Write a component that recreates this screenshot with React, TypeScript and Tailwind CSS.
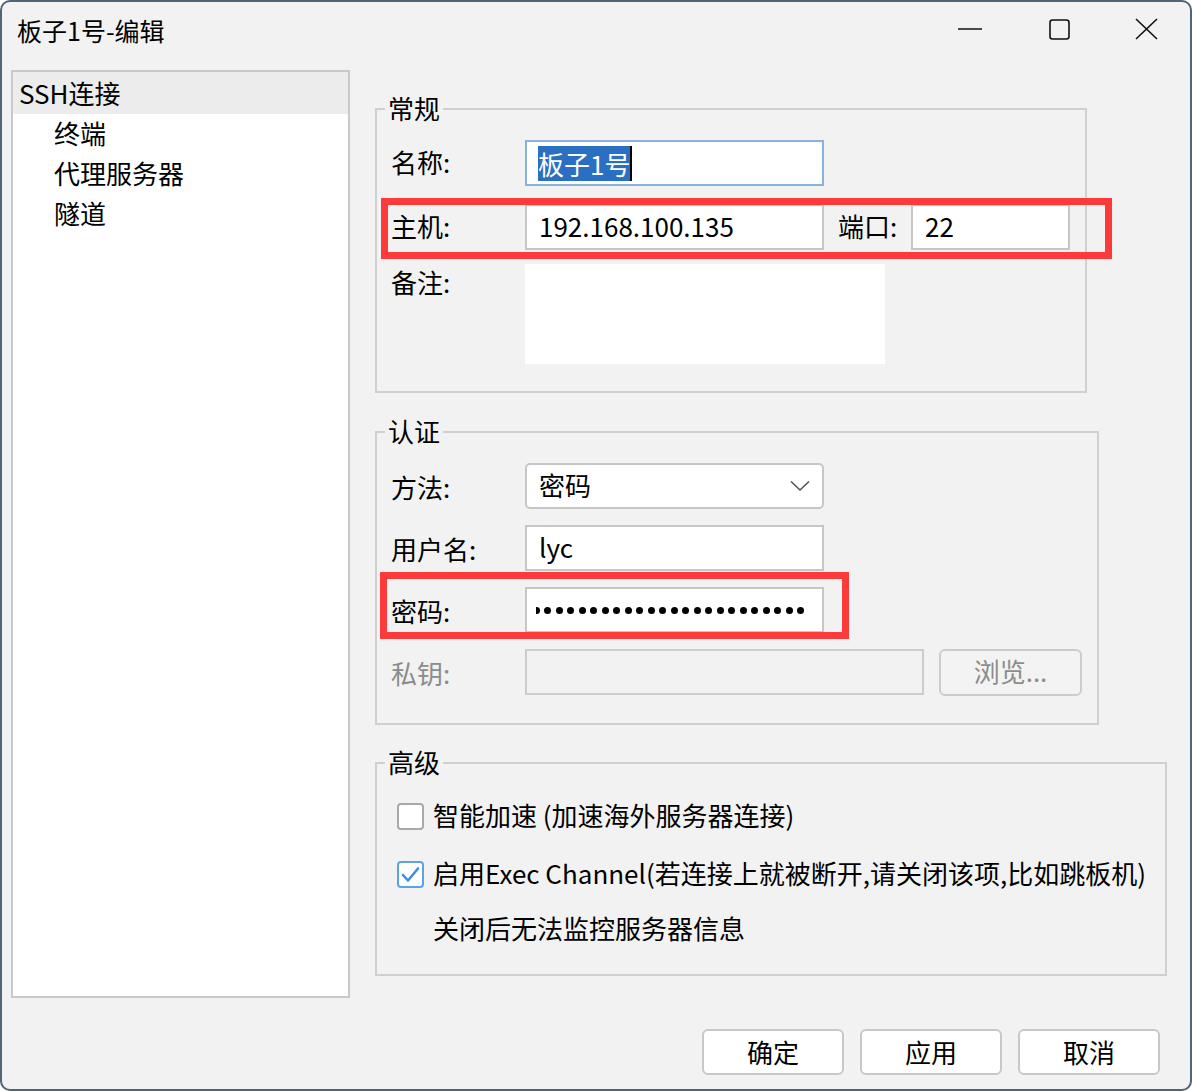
import React from "react";

// Session edit dialog (SSH) — fixed-size Windows-style window
const DOTS = Array.from({ length: 25 }, (_, i) => i);

function Group({ title, className, children }: { title: string; className: string; children: React.ReactNode }) {
  return (
    <div className={`relative border-2 border-[#d0d0d0] ${className}`}>
      <span className="absolute -top-[17px] left-[8px] bg-[#f2f2f2] px-[3px] leading-[30px]">{title}</span>
      {children}
    </div>
  );
}

function Field({ children, className }: { children?: React.ReactNode; className: string }) {
  return (
    <div className={`h-[46px] border-2 border-[#c6c6c6] bg-white pl-[12px] pb-[3px] flex items-center shrink-0 ${className}`}>
      {children}
    </div>
  );
}

function TitleButtons() {
  return (
    <div className="ml-auto flex">
      <div className="w-[88px] h-[54px] flex items-center justify-center pr-[2px]">
        <svg width="24" height="4" viewBox="0 0 24 4">
          <line x1="0" y1="2" x2="24" y2="2" stroke="#111" strokeWidth="1.6" />
        </svg>
      </div>
      <div className="w-[88px] h-[54px] flex items-center justify-center">
        <svg width="21" height="21" viewBox="0 0 21 21">
          <rect x="1" y="1" width="19" height="19" rx="2.5" fill="none" stroke="#111" strokeWidth="1.6" />
        </svg>
      </div>
      <div className="w-[87px] h-[54px] flex items-center justify-center">
        <svg width="23" height="22" viewBox="0 0 23 22">
          <path d="M1 1 L22 21 M22 1 L1 21" stroke="#111" strokeWidth="1.6" fill="none" />
        </svg>
      </div>
    </div>
  );
}

export default function App() {
  return (
    <div className="w-[1192px] h-[1091px] bg-[#f2f2f2] border-2 border-[#4f6573] rounded-[10px] overflow-hidden text-[26px] text-black font-['Noto_Sans_CJK_SC','Noto_Sans',sans-serif]">
      {/* title bar */}
      <div className="h-[68px] flex items-start">
        <div className="ml-[15px] mt-[11px] text-[25px] leading-[34px]">板子1号-编辑</div>
        <TitleButtons />
      </div>

      <div className="flex items-start">
        {/* tree */}
        <div className="ml-[9px] w-[339px] h-[928px] border-2 border-[#c9c9c9] bg-white leading-[38px]">
          <div className="h-[42px] bg-[#ececec] pl-[6px] leading-[42px]">SSH连接</div>
          <div className="h-[40px] pl-[41px]">终端</div>
          <div className="h-[40px] pl-[41px]">代理服务器</div>
          <div className="h-[40px] pl-[41px]">隧道</div>
        </div>

        <div className="ml-[25px] flex-1 flex flex-col pt-[38px]">
          {/* 常规 */}
          <Group title="常规" className="w-[712px] h-[285px] pt-[30px] pl-[14px]">
            <div className="flex items-center h-[46px]">
              <div className="w-[134px] shrink-0 pb-[3px]">名称:</div>
              <div className="w-[299px] h-[46px] border-2 border-[#8ab2de] bg-white pl-[11px] flex items-center">
                <span className="bg-[#2a6fc1] text-white leading-[35px] border-r-2 border-black">板子1号</span>
              </div>
            </div>
            <div className="flex items-center h-[46px] mt-[18px]">
              <div className="w-[134px] shrink-0 pb-[3px]">主机:</div>
              <Field className="w-[299px] leading-[30px]">192.168.100.135</Field>
              <div className="w-[73px] ml-[14px] shrink-0 pb-[3px]">端口:</div>
              <Field className="w-[159px] leading-[30px]">22</Field>
            </div>
            <div className="flex items-start mt-[14px]">
              <div className="w-[134px] shrink-0 leading-[36px]">备注:</div>
              <div className="w-[360px] h-[100px] bg-white" />
            </div>
            <div className="absolute left-[4px] top-[88px] w-[731px] h-[61px] border-[7px] border-[#fd3a3a]" />
          </Group>

          {/* 认证 */}
          <Group title="认证" className="w-[724px] h-[294px] mt-[38px] pt-[30px] pl-[14px]">
            <div className="flex flex-col gap-[16px]">
              <div className="flex items-center h-[46px]">
                <div className="w-[134px] shrink-0">方法:</div>
                <div className="w-[299px] h-[46px] border-2 border-[#c6c6c6] rounded-[5px] bg-white pl-[12px] pr-[12px] flex items-center justify-between leading-[30px]">
                  <span className="pb-[2px]">密码</span>
                  <svg width="20" height="12" viewBox="0 0 20 12">
                    <path d="M1 1.5 L10 10 L19 1.5" fill="none" stroke="#555" strokeWidth="1.6" />
                  </svg>
                </div>
              </div>
              <div className="flex items-center h-[46px]">
                <div className="w-[134px] shrink-0">用户名:</div>
                <Field className="w-[299px] leading-[30px]">lyc</Field>
              </div>
              <div className="flex items-center h-[46px]">
                <div className="w-[134px] shrink-0">密码:</div>
                <div className="w-[299px] h-[46px] border-2 border-[#c6c6c6] bg-white flex items-center">
                  <div className="ml-[9px] w-[268px] flex justify-end gap-[4.5px] overflow-hidden">
                    {DOTS.map((d) => (
                      <span key={d} className="w-[7px] h-[7px] rounded-full bg-black shrink-0" />
                    ))}
                  </div>
                </div>
              </div>
              <div className="flex items-center h-[46px]">
                <div className="w-[134px] shrink-0 text-[#8c8c8c]">私钥:</div>
                <div className="w-[399px] h-[46px] border-2 border-[#cccccc] bg-[#f2f2f2]" />
                <div className="ml-[15px] w-[143px] h-[47px] border-2 border-[#cccccc] rounded-[6px] bg-[#f3f3f3] text-[#8c8c8c] pb-[3px] flex items-center justify-center leading-[30px]">
                  浏览...
                </div>
              </div>
            </div>
            <div className="absolute left-[3px] top-[139px] w-[469px] h-[67px] border-[7px] border-[#fd3a3a]" />
          </Group>

          {/* 高级 */}
          <Group title="高级" className="w-[792px] h-[214px] mt-[37px] pt-[23px] pl-[20px]">
            <div className="flex items-center h-[58px]">
              <div className="w-[27px] h-[27px] border-2 border-[#a9a9a9] rounded-[4px] bg-white shrink-0" />
              <span className="ml-[9px] pb-[3px] leading-[30px]">智能加速 (加速海外服务器连接)</span>
            </div>
            <div className="flex items-center h-[58px]">
              <div className="w-[27px] h-[27px] border-2 border-[#5aa2ea] rounded-[4px] bg-white shrink-0 flex items-center justify-center">
                <svg width="19" height="17" viewBox="0 0 19 17">
                  <path d="M2 9 L7 14.5 L17 2.5" fill="none" stroke="#3d8fe4" strokeWidth="2.6" strokeLinecap="round" strokeLinejoin="round" />
                </svg>
              </div>
              <span className="ml-[9px] pb-[3px] leading-[30px]">启用Exec Channel(若连接上就被断开,请关闭该项,比如跳板机)</span>
            </div>
            <div className="flex items-center h-[52px] pl-[36px] pb-[3px] leading-[30px]">关闭后无法监控服务器信息</div>
          </Group>

          {/* buttons */}
          <div className="mt-[53px] pr-[30px] flex justify-end gap-[16px]">
            <div className="w-[142px] h-[46px] border-2 border-[#c8c8c8] rounded-[6px] bg-white flex items-center justify-center leading-[30px]">确定</div>
            <div className="w-[142px] h-[46px] border-2 border-[#c8c8c8] rounded-[6px] bg-white flex items-center justify-center leading-[30px]">应用</div>
            <div className="w-[142px] h-[46px] border-2 border-[#c8c8c8] rounded-[6px] bg-white flex items-center justify-center leading-[30px]">取消</div>
          </div>
        </div>
      </div>
    </div>
  );
}
